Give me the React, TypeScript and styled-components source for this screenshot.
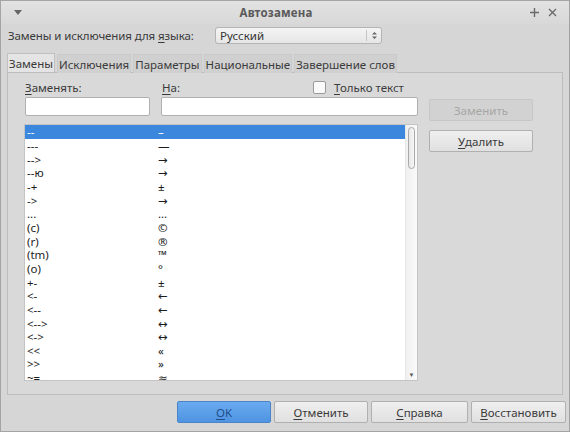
import React from 'react';
import styled, { createGlobalStyle } from 'styled-components';

const GlobalStyle = createGlobalStyle`
  html, body {
    margin: 0;
    padding: 0;
    background: #d6d6d6;
  }
  body {
    font-family: 'Noto Sans', 'Open Sans', sans-serif;
    font-size: 11.5px;
    color: #3c3c3c;
  }
`;

const Window = styled.div`
  width: 570px;
  height: 432px;
  box-sizing: border-box;
  border: 1px solid #a4a4a4;
  background: #d6d6d6;
  display: flex;
  flex-direction: column;
  overflow: hidden;
`;

const TitleBar = styled.div`
  height: 23px;
  display: flex;
  align-items: center;
  padding: 0 8px;
  background: linear-gradient(#e2e2e2, #d8d8d8);
  color: #5a5a5a;
  font-weight: bold;
  font-size: 11.5px;
`;

const TitleText = styled.div`
  flex: 1;
  text-align: center;
  letter-spacing: 0.2px;
`;

const TitleIcon = styled.span`
  width: 18px;
  display: flex;
  justify-content: center;
  color: #6a6a6a;
`;

const LangRow = styled.div`
  display: flex;
  align-items: center;
  height: 22px;
  padding: 0 0 0 7px;
`;

const LangLabel = styled.span`
  width: 207px;
  color: #3a3a3a;
  letter-spacing: -0.1px;
`;

const Combo = styled.div`
  width: 167px;
  height: 17px;
  box-sizing: border-box;
  border: 1px solid #b4b4b4;
  border-radius: 3px;
  background: linear-gradient(#f4f4f4, #e6e6e6);
  display: flex;
  align-items: center;
  padding-left: 4px;
  color: #333;
`;

const ComboText = styled.span`
  flex: 1;
`;

const ComboArrows = styled.span`
  width: 14px;
  height: 11px;
  border-left: 1px solid #c4c4c4;
  display: flex;
  justify-content: center;
  align-items: center;
`;

const TabStrip = styled.div`
  display: flex;
  gap: 2px;
  padding-left: 6px;
  margin-top: 7px;
  height: 19px;
`;

const Tab = styled.div<{ $active?: boolean }>`
  padding: 0 1px;
  display: flex;
  align-items: center;
  height: 19px;
  box-sizing: border-box;
  background: ${p => (p.$active ? '#e4e4e4' : '#d0d0d0')};
  border: 1px solid ${p => (p.$active ? '#c0c0c0' : '#cacaca')};
  border-bottom: none;
  color: #3a3a3a;
  position: relative;
  top: ${p => (p.$active ? '0' : '1px')};
`;

const Panel = styled.div`
  margin: 0 6px;
  height: 323px;
  box-sizing: border-box;
  border: 1px solid #bdbdbd;
  background: #d9d9d9;
  display: flex;
  padding: 6px 0 0 16px;
  gap: 11px;
`;

const LeftColumn = styled.div`
  width: 394px;
  display: flex;
  flex-direction: column;
`;

const LabelRow = styled.div`
  display: flex;
  align-items: center;
  height: 17px;
`;

const FieldLabel = styled.span<{ $w: number }>`
  width: ${p => p.$w}px;
  padding-left: 1px;
  color: #3a3a3a;
`;

const Checkbox = styled.span`
  width: 11px;
  height: 11px;
  border: 1px solid #9a9a9a;
  border-radius: 2px;
  background: #fafafa;
  margin-right: 8px;
`;

const InputRow = styled.div`
  display: flex;
  gap: 11px;
  margin-top: 1px;
  padding-left: 1px;
`;

const TextInput = styled.div<{ $w: number }>`
  width: ${p => p.$w}px;
  height: 19px;
  box-sizing: border-box;
  border: 1px solid #b0b0b0;
  border-radius: 2px;
  background: #fff;
`;

const List = styled.div`
  margin-top: 8px;
  height: 257px;
  box-sizing: border-box;
  border: 1px solid #c4c4c4;
  background: #fff;
  display: flex;
  overflow: hidden;
`;

const Rows = styled.div`
  flex: 1;
  display: flex;
  flex-direction: column;
`;

const Row = styled.div<{ $selected?: boolean }>`
  height: 13.67px;
  flex-shrink: 0;
  display: flex;
  align-items: center;
  line-height: 13px;
  font-size: 11.5px;
  color: ${p => (p.$selected ? '#fff' : '#1c1c1c')};
  background: ${p => (p.$selected ? '#3a87dd' : 'transparent')};
  font-family: 'Noto Sans', 'DejaVu Sans', sans-serif;
`;

const Cell = styled.span<{ $w?: number }>`
  width: ${p => (p.$w ? `${p.$w}px` : 'auto')};
  padding-left: 2px;
  white-space: pre;
`;

const Scrollbar = styled.div`
  width: 11px;
  background: linear-gradient(90deg, #f0f0f0, #fafafa);
  border-left: 1px solid #e6e6e6;
  display: flex;
  flex-direction: column;
  align-items: center;
  padding-top: 2px;
  position: relative;
`;

const Thumb = styled.div`
  width: 7px;
  height: 42px;
  box-sizing: border-box;
  border: 1px solid #a8a8a8;
  border-radius: 4px;
  background: linear-gradient(90deg, #e8e8e8, #f6f6f6);
`;

const ScrollArrow = styled.span`
  position: absolute;
  bottom: 1px;
  font-size: 6px;
  color: #555;
`;

const RightColumn = styled.div`
  display: flex;
  flex-direction: column;
  gap: 9px;
  padding-top: 20px;
`;

const Button = styled.div<{ $w?: number; $disabled?: boolean; $primary?: boolean }>`
  width: ${p => (p.$w ? `${p.$w}px` : '104px')};
  height: 22px;
  box-sizing: border-box;
  border: 1px solid ${p => (p.$primary ? '#4c84c8' : p.$disabled ? '#c6c6c6' : '#b0b0b0')};
  border-radius: 2px;
  background: ${p =>
    p.$primary
      ? 'linear-gradient(#6aaaf0, #4f94e2)'
      : p.$disabled
      ? '#d2d2d2'
      : 'linear-gradient(#efefef, #e0e0e0)'};
  color: ${p => (p.$primary ? '#1f4f8a' : p.$disabled ? '#a6a6a6' : '#3a3a3a')};
  display: flex;
  align-items: center;
  justify-content: center;
`;

const Footer = styled.div`
  flex: 1;
  display: flex;
  justify-content: flex-end;
  align-items: flex-start;
  gap: 3px;
  padding: 6px 3px 0 0;
`;

const U = styled.span`
  text-decoration: underline;
  text-underline-offset: 2px;
`;

const rows: [string, string][] = [
  ['--', '–'],
  ['---', '—'],
  ['-->', '→'],
  ['--ю', '→'],
  ['-+', '±'],
  ['->', '→'],
  ['...', '…'],
  ['(c)', '©'],
  ['(r)', '®'],
  ['(tm)', '™'],
  ['(o)', '°'],
  ['+-', '±'],
  ['<-', '←'],
  ['<--', '←'],
  ['<-->', '↔'],
  ['<->', '↔'],
  ['<<', '«'],
  ['>>', '»'],
  ['~=', '≈'],
];

export default function App() {
  return (
    <>
      <GlobalStyle />
      <Window>
        <TitleBar>
          <TitleIcon>
            <svg width="8" height="5" viewBox="0 0 8 5">
              <path d="M0 0h8L4 5z" fill="#666" />
            </svg>
          </TitleIcon>
          <TitleText>Автозамена</TitleText>
          <TitleIcon>
            <svg width="9" height="9" viewBox="0 0 9 9">
              <path d="M4.5 0v9M0 4.5h9" stroke="#6a6a6a" strokeWidth="1.4" />
            </svg>
          </TitleIcon>
          <TitleIcon>
            <svg width="9" height="9" viewBox="0 0 9 9">
              <path d="M1 1l7 7M8 1L1 8" stroke="#6a6a6a" strokeWidth="1.4" />
            </svg>
          </TitleIcon>
        </TitleBar>

        <LangRow>
          <LangLabel>
            Замены и исключения для <U>я</U>зыка:
          </LangLabel>
          <Combo>
            <ComboText>Русский</ComboText>
            <ComboArrows>
              <svg width="5" height="9" viewBox="0 0 5 9">
                <path d="M0 3.5L2.5 1L5 3.5zM0 5.5L2.5 8L5 5.5z" fill="#666" />
              </svg>
            </ComboArrows>
          </Combo>
        </LangRow>

        <TabStrip>
          <Tab $active>Замены</Tab>
          <Tab>Исключения</Tab>
          <Tab>Параметры</Tab>
          <Tab>Национальные</Tab>
          <Tab>Завершение слов</Tab>
        </TabStrip>

        <Panel>
          <LeftColumn>
            <LabelRow>
              <FieldLabel $w={136}>
                <U>З</U>аменять:
              </FieldLabel>
              <FieldLabel $w={151}>
                <U>Н</U>а:
              </FieldLabel>
              <Checkbox />
              <span>
                <U>Т</U>олько текст
              </span>
            </LabelRow>
            <InputRow>
              <TextInput $w={125} />
              <TextInput $w={257} />
            </InputRow>
            <List>
              <Rows>
                {rows.map(([from, to], i) => (
                  <Row key={from} $selected={i === 0}>
                    <Cell $w={129}>{from}</Cell>
                    <Cell>{to}</Cell>
                  </Row>
                ))}
              </Rows>
              <Scrollbar>
                <Thumb />
                <ScrollArrow>▼</ScrollArrow>
              </Scrollbar>
            </List>
          </LeftColumn>
          <RightColumn>
            <Button $disabled>Заменить</Button>
            <Button>
              <U>У</U>далить
            </Button>
          </RightColumn>
        </Panel>

        <Footer>
          <Button $primary $w={94}>
            <U>O</U>K
          </Button>
          <Button $w={94}>
            <U>О</U>тменить
          </Button>
          <Button $w={97}>
            <U>С</U>правка
          </Button>
          <Button $w={95}>
            <U>В</U>осстановить
          </Button>
        </Footer>
      </Window>
    </>
  );
}
